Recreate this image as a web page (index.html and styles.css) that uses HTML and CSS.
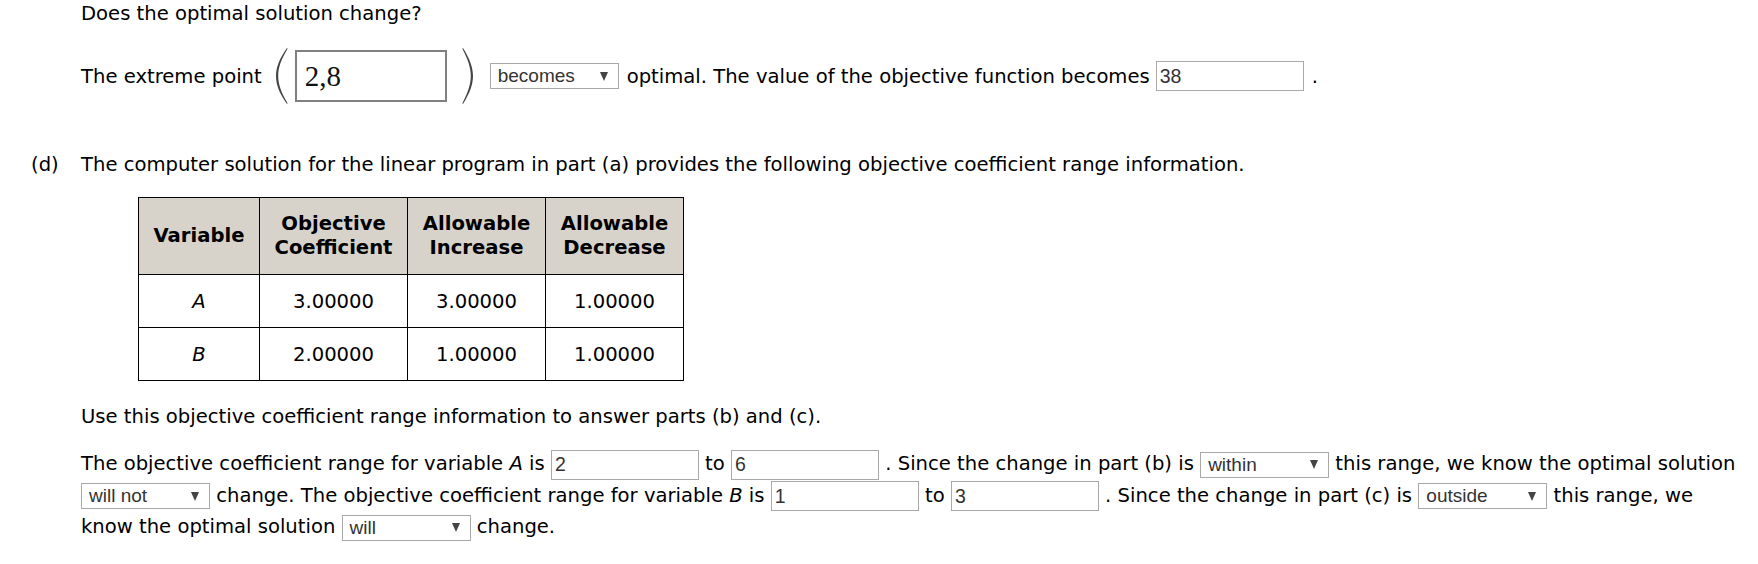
FILE: index.html
```html
<!DOCTYPE html>
<html>
<head>
<meta charset="utf-8">
<link rel="stylesheet" href="styles.css">
</head>
<body>
<div class="page">
  <p class="q">Does the optimal solution change?</p>
  <div class="line2">
    <span>The extreme point</span>
    <svg class="paren-l" width="15" height="58" viewBox="0 0 15 58"><path d="M14,1 C6,12 3,21 3,29 C3,37 6,46 14,57 L14.6,56.2 C8,45.5 5.2,37 5.2,29 C5.2,21 8,12.5 14.6,1.8 Z" fill="#444"/></svg>
    <span class="mbox">2,8</span>
    <svg class="paren-r" width="12" height="58" viewBox="0 0 12 58"><path d="M1,1 C8,12 11,21 11,29 C11,37 8,46 1,57 L0.4,56.2 C6,45.5 8.8,37 8.8,29 C8.8,21 6,12.5 0.4,1.8 Z" fill="#444"/></svg>
    <span class="dd first">becomes<span class="arr"></span></span>
    <span class="after-dd">optimal. The value of the objective function becomes</span>
    <input class="tb after-text" type="text" value="38">
    <span class="dot">.</span>
  </div>

  <div class="part">
    <span class="label">(d)</span>
    <span>The computer solution for the linear program in part (a) provides the following objective coefficient range information.</span>
  </div>

  <table class="range">
    <colgroup>
      <col class="c1"><col class="c2"><col class="c3"><col class="c4">
    </colgroup>
    <thead>
      <tr>
        <th>Variable</th>
        <th>Objective<br>Coefficient</th>
        <th>Allowable<br>Increase</th>
        <th>Allowable<br>Decrease</th>
      </tr>
    </thead>
    <tbody>
      <tr><td><i>A</i></td><td>3.00000</td><td>3.00000</td><td>1.00000</td></tr>
      <tr><td><i>B</i></td><td>2.00000</td><td>1.00000</td><td>1.00000</td></tr>
    </tbody>
  </table>

  <p class="use">Use this objective coefficient range information to answer parts (b) and (c).</p>

  <p class="para">The objective coefficient range for variable <i>A</i> is <input class="tb" type="text" value="2"> to <input class="tb" type="text" value="6"> . Since the change in part (b) is <span class="dd">within<span class="arr"></span></span> this range, we know the optimal solution<br><span class="dd">will not<span class="arr"></span></span> change. The objective coefficient range for variable <i>B</i> is <input class="tb" type="text" value="1"> to <input class="tb" type="text" value="3"> . Since the change in part (c) is <span class="dd">outside<span class="arr"></span></span> this range, we<br>know the optimal solution <span class="dd">will<span class="arr"></span></span> change.</p>
</div>
</body>
</html>
```
FILE: styles.css
```css
body {
  margin: 0;
  background: #fff;
  color: #000;
  font-family: "DejaVu Sans", Verdana, sans-serif;
  font-size: 19.6px;
}

.page {
  padding-left: 81px;
}

.q {
  margin: 0;
  padding-top: 2px;
  line-height: 23px;
}

.line2 {
  margin-top: 22px;
  height: 58px;
  display: flex;
  align-items: center;
  white-space: nowrap;
}

.paren-l {
  margin-left: 11px;
  display: block;
}

.mbox {
  margin-left: 7px;
  box-sizing: border-box;
  width: 152px;
  height: 52px;
  border: 2px solid #808080;
  padding-left: 8px;
  display: flex;
  align-items: center;
  font-family: "Liberation Serif", "Times New Roman", serif;
  font-size: 29px;
  color: #111;
}

.paren-r {
  margin-left: 15px;
  display: block;
}

.dd {
  display: inline-flex;
  align-items: center;
  justify-content: space-between;
  box-sizing: border-box;
  width: 129px;
  height: 26px;
  border: 1px solid #a9a9a9;
  padding: 0 10px 0 7px;
  font-family: "Liberation Sans", Arial, sans-serif;
  font-size: 19px;
  color: #333;
  vertical-align: middle;
  background: #fff;
}

.dd.first {
  margin-left: 16px;
}

.arr {
  width: 0;
  height: 0;
  border-left: 4px solid transparent;
  border-right: 4px solid transparent;
  border-top: 9px solid #444;
}

.after-dd {
  margin-left: 8px;
}

.tb {
  box-sizing: border-box;
  width: 148px;
  height: 30px;
  border: 1px solid #a9a9a9;
  padding: 0 3px;
  margin: 0;
  font-family: "Liberation Sans", Arial, sans-serif;
  font-size: 19.5px;
  color: #333;
  vertical-align: middle;
  background: #fff;
  outline: none;
}

.after-text {
  margin-left: 6px;
}

.dot {
  margin-left: 8px;
}

.part {
  margin-top: 48px;
  margin-left: -50px;
  display: flex;
  line-height: 23px;
  white-space: nowrap;
}

.label {
  width: 50px;
  flex: none;
}

.range {
  margin-top: 21px;
  margin-left: 57px;
  border-collapse: collapse;
  table-layout: fixed;
  width: 545px;
}

.c1 { width: 121px; }
.c2 { width: 148px; }
.c3 { width: 138px; }
.c4 { width: 138px; }

.range th,
.range td {
  border: 1px solid #000;
  text-align: center;
  padding: 0;
}

.range th {
  background: #d7d3ca;
  height: 76px;
  line-height: 24px;
  font-weight: bold;
}

.range td {
  height: 52px;
}

.use {
  margin: 24px 0 0;
  line-height: 23px;
}

.para {
  margin: 20px 0 0;
  line-height: 31.5px;
  white-space: nowrap;
}
```
